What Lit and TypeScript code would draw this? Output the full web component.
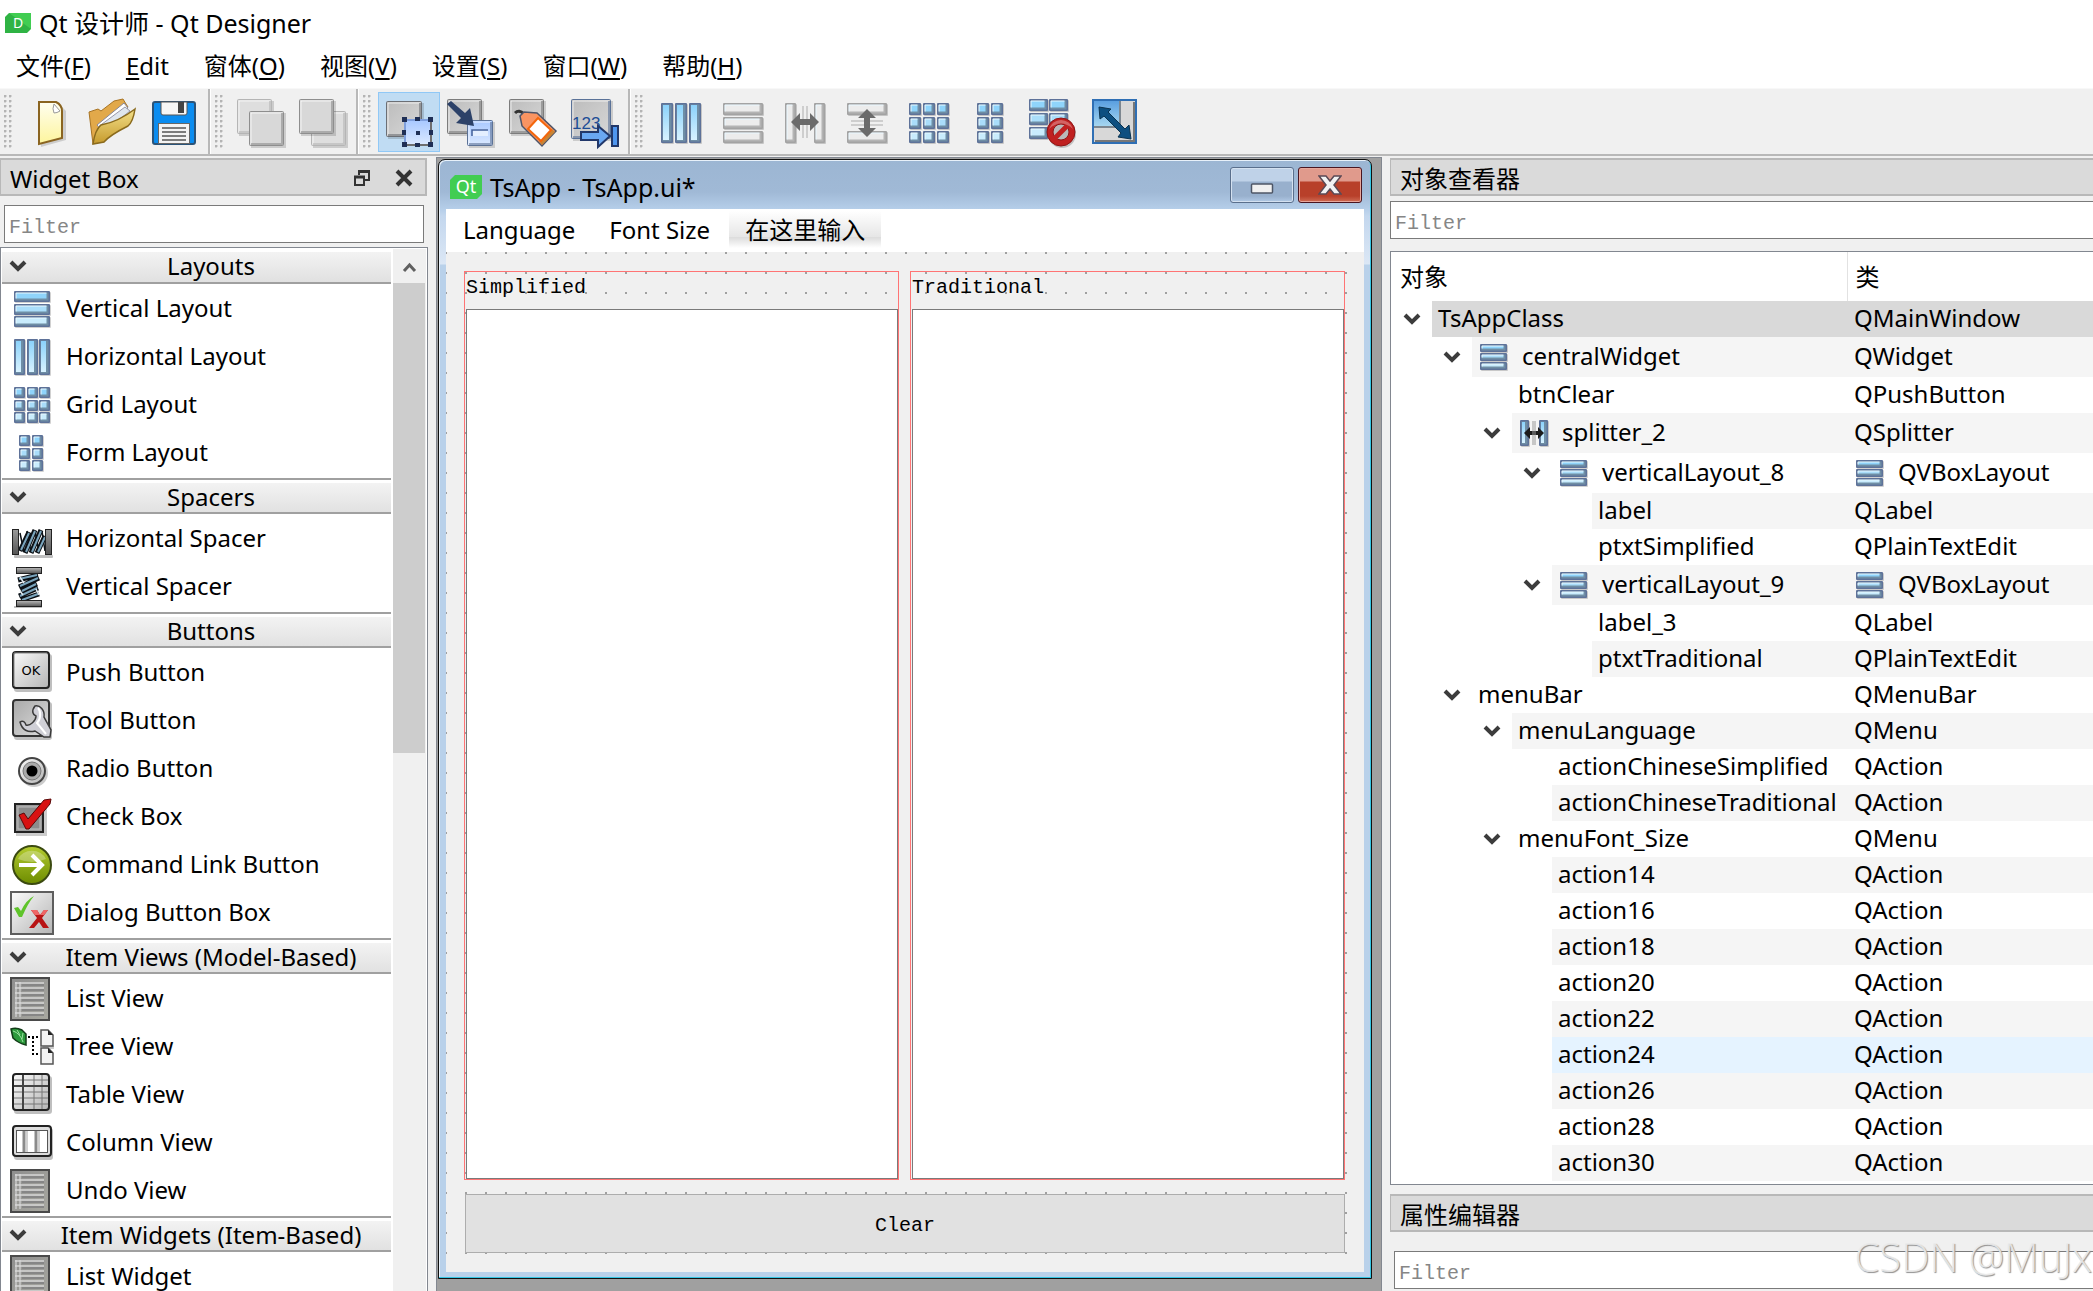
import { LitElement, html, svg, css, nothing } from "lit";
import { customElement, state } from "lit/decorators.js";
import { classMap } from "lit/directives/class-map.js";

type Tone = "blue" | "gray";

/** A bevelled cell, the building block of every layout icon. */
const cell = (x: number, y: number, w: number, h: number, row = 0, tone: Tone = "blue") => {
  const edge = tone === "blue" ? "#5e7299" : "#a3a3a3";
  const dark = tone === "blue" ? "#6f8ea5" : "#b4b4b4";
  const fill = tone === "blue" ? ["#8fd4fb", "#aaddfa", "#c9ecfd"][row] : "#ececec";
  return svg`
    <rect x=${x + 1} y=${y + 1} width=${w} height=${h} rx="1" fill="#000" opacity=".18"></rect>
    <rect x=${x} y=${y} width=${w} height=${h} rx="1" fill=${edge}></rect>
    <rect x=${x + 1.5} y=${y + 1.5} width=${w - 3} height=${h - 3} fill=${dark}></rect>
    <rect x=${x + 2} y=${y + 2} width=${w - 5.5} height=${h - 5.5} fill=${fill}></rect>
    <path d="M${x + 2} ${y + h - 3.5}V${y + 2}H${x + w - 3.5}" fill="none" stroke="#e8f7ff" stroke-width="1"></path>`;
};

const tallBar = (x: number, y: number, w: number, h: number) => svg`
  <rect x=${x + 1} y=${y + 1} width=${w} height=${h} rx="1" fill="#000" opacity=".18"></rect>
  <rect x=${x} y=${y} width=${w} height=${h} rx="1" fill="#5e7299"></rect>
  <rect x=${x + 1.5} y=${y + 1.5} width=${w - 3} height=${h - 3} fill="#6f8ea5"></rect>
  <rect x=${x + 2} y=${y + 2} width=${w - 6} height=${h - 5} fill="url(#sky)"></rect>`;

const cells = (xs: number[], ys: number[], w: number, h: number, tone: Tone = "blue") =>
  ys.map((y, r) => xs.map((x) => cell(x, y, w, h, r, tone)));

const block = (x: number, y: number, s: number, edge = "#7c7c7c", fill = "url(#slab)") => svg`
  <rect x=${x + 2} y=${y + 2} width=${s} height=${s} fill="#000" opacity=".15"></rect>
  <rect x=${x + 0.5} y=${y + 0.5} width=${s - 1} height=${s - 1} rx="1" fill=${fill} stroke=${edge}></rect>
  <path d="M${x + 2} ${y + s - 2}V${y + 2}H${x + s - 2}" fill="none" stroke="#fff" opacity=".7"></path>
  <path d="M${x + s - 2} ${y + 2}V${y + s - 2}H${x + 2}" fill="none" stroke=${edge} stroke-width="2" opacity=".6"></path>`;

const listGlyph = svg`
  <rect x="1" y="1" width="38" height="42" fill="url(#list)" stroke="#4a4a4a" stroke-width="2"></rect>
  <path d="M6 5V40M10 5V40" stroke="#c9c9c9" stroke-width="1.500"></path>
  <path d="M5 6H34M5 11H34M5 16H34M5 21H34M5 26H34M5 31H34M5 36H34" stroke="#dadada" stroke-width="2" opacity=".7"></path>
  <path d="M12 8H34M12 13H34M12 18H34M12 23H34M12 28H34M12 33H34M12 38H34" stroke="#868686" stroke-width="2"></path>`;

/** Coil between two end plates, drawn lying down. */
const coil = svg`
  <path d="M10 34L19 15M15 36L25 13M21 36L31 13M27 36L35 19" stroke="#0c1116" stroke-width="5"></path>
  <path d="M10 16L14 35M17 14L21 35M25 14L29 35M32 14L35 34" stroke="#0c1116" stroke-width="1.500"></path>
  <path d="M11 33L19 16M16 35L25 14M22 35L31 14M28 35L35 20" stroke="#7ba5bd" stroke-width="2"></path>
  <rect x="4" y="38" width="39" height="3" rx="1" fill="#000" opacity=".25"></rect>
  <rect x="2.500" y="12.500" width="6" height="25" fill="url(#post)" stroke="#222"></rect>
  <rect x="35.500" y="12.500" width="6" height="25" fill="url(#post)" stroke="#222"></rect>`;

const uprightCoil = svg`
  <path d="M8 15L28 10M9 22L29 13M11 26L27 19M9 31L28 23M11 35L29 29" stroke="#0c1116" stroke-width="5"></path>
  <path d="M9 14L27 10M10 21L28 13M12 26L26 19M10 31L27 23M12 35L28 29" stroke="#7ba5bd" stroke-width="2"></path>
  <path d="M10 12L14 18M26 24L29 30M10 26L13 30" stroke="#dfe9ef" stroke-width="1.500"></path>
  <rect x="4" y="41" width="28" height="2" fill="#000" opacity=".25"></rect>
  <rect x="6.500" y="2.500" width="25" height="6" fill="url(#plate)" stroke="#222"></rect>
  <rect x="6.500" y="35.500" width="25" height="6" fill="url(#plate)" stroke="#222"></rect>`;

const A = [4, 17, 29];
const B = [5, 19, 33];
const C = [4, 18, 32];

const widgetIcons: Record<string, unknown> = {
  vlayout: cells([4], A, 36, 11),
  hlayout: A.map((x) => tallBar(x, 4, 11, 36)),
  grid: cells(A, A, 11, 11),
  form: cells([9, 22], A, 11, 11),
  hspacer: coil,
  vspacer: uprightCoil,
  push: svg`
    <rect x="4" y="3" width="38" height="38" rx="3" fill="#000" opacity=".25"></rect>
    <rect x="3" y="1" width="36" height="36" rx="3" fill="url(#face)" stroke="#222" stroke-width="2"></rect>
    <path d="M4 35V2H37" fill="none" stroke="#888"></path>
    <text x="21" y="24" text-anchor="middle" class="ok">OK</text>`,
  tool: svg`
    <rect x="4" y="3" width="38" height="38" rx="3" fill="#000" opacity=".25"></rect>
    <rect x="3" y="1" width="36" height="36" rx="3" fill="url(#steel)" stroke="#333" stroke-width="2"></rect>
    <path d="M25 7C30 6 35 11 34 18L41 31L40 38H34L25 32C18 34 12 31 10 23C13 21 15 23 16 26C20 27 26 22 26 17C23 16 21 12 25 7Z" fill="#cfcfd6" stroke="#3a3a3a" stroke-width="1.500"></path>
    <path d="M28 9C31 12 31 20 27 24L36 35" fill="none" stroke="#fff" stroke-width="2"></path>`,
  radio: svg`
    <circle cx="24" cy="26" r="14" fill="#000" opacity=".2"></circle>
    <circle cx="22" cy="24" r="13" fill="url(#face)" stroke="#444" stroke-width="2"></circle>
    <circle cx="22" cy="24" r="9" fill="#aaa" stroke="#777"></circle>
    <circle cx="22" cy="24" r="5.500" fill="#000"></circle>`,
  check: svg`
    <rect x="6" y="10" width="31" height="31" fill="#000" opacity=".2"></rect>
    <rect x="5" y="9" width="28" height="28" fill="#9a9a9a" stroke="#222" stroke-width="2"></rect>
    <rect x="8" y="12" width="22" height="22" fill="#8b8b8b" stroke="#bdbdbd"></rect>
    <path d="M9 20L14 18L18 24L34 5L41 4L40 9L19 34H16Z" fill="#d81212" stroke="#5a0808"></path>`,
  command: svg`
    <circle cx="22" cy="22" r="19" fill="url(#lime)" stroke="#3b4a10" stroke-width="2"></circle>
    <path d="M8 16A15 13 0 0 1 36 16Q22 22 8 16" fill="#fff" opacity=".28"></path>
    <path d="M9 22H31M22 12L32 22L22 32" fill="none" stroke="#fff" stroke-width="4"></path>`,
  dialog: svg`
    <rect x="1" y="1" width="42" height="42" fill="url(#face)" stroke="#5e5e5e" stroke-width="2"></rect>
    <path d="M4 17L8 16L11 20Q16 9 24 5Q18 12 12 26H9Z" fill="#5fc42a"></path>
    <path d="M21 19H27L30 24L34 19H38L32 27L39 37H33L29 31L24 37H19L27 27Z" fill="#b81414"></path>
    <path d="M21 19H27L30 24L34 19H38L34 24H25Z" fill="#e66"></path>`,
  list: listGlyph,
  tree: svg`
    <path d="M1 4Q6 2 12 5L16 9V20Q8 18 3 13Z" fill="#2c9a3c" stroke="#123c18" stroke-width="1.500"></path>
    <path d="M3 6Q10 8 13 17M7 5L10 10M13 8L12 14" stroke="#9be29f" fill="none"></path>
    <path d="M18 12H29M23 12V29H29" fill="none" stroke="#000" stroke-width="2" stroke-dasharray="2 2"></path>
    <rect x="33" y="21" width="11" height="3" fill="#000" opacity=".2"></rect>
    <path d="M31 5H38L43 10V21H31ZM31 23H38L43 28V39H31Z" fill="#f4f4f4" stroke="#555" stroke-width="1.500"></path>
    <path d="M38 5V10H43ZM38 23V28H43Z" fill="#222"></path>`,
  table: svg`
    <rect x="4" y="3" width="38" height="38" rx="3" fill="#000" opacity=".25"></rect>
    <rect x="3" y="1" width="36" height="36" rx="3" fill="url(#face)" stroke="#222" stroke-width="2"></rect>
    <path d="M4 7H38M4 19H38M4 25H38M4 31H38M24 2V36M32 2V36" stroke="#777"></path>
    <path d="M13 2V36M4 13H38" stroke="#444" stroke-width="2"></path>`,
  column: svg`
    <rect x="4" y="7" width="39" height="32" rx="3" fill="#000" opacity=".25"></rect>
    <rect x="3" y="5" width="38" height="30" rx="3" fill="#ddd" stroke="#222" stroke-width="2"></rect>
    <rect x="6.500" y="9.500" width="31" height="22" fill="#fff" stroke="#555"></rect>
    <path d="M14 10V31M26 10V31" stroke="#8a8a8a" stroke-width="3"></path>
    <path d="M17 10V31M29 10V31" stroke="#d0d0d0" stroke-width="2"></path>`,
};

const splitArrow = (color: string) => svg`
  <path d="M10 24L19 15V21H29V15L38 24L29 33V27H19V33Z" fill=${color}></path>
  <path d="M22 8V40M26 8V40" stroke=${color} stroke-width="1" opacity=".5"></path>`;

const toolIcons: Record<string, unknown> = {
  new: svg`
    <path d="M14 5H32L40 13V42L15 49Z" fill="#000" opacity=".15"></path>
    <path d="M13 4H30Q36 7 36 13V40L13 46Z" fill="url(#paper)" stroke="#8a6420" stroke-width="2"></path>
    <path d="M28 6Q26 11 28 15Q31 15 34 13Z" fill="#fff" stroke="#999"></path>`,
  open: svg`
    <path d="M1 14L10 11L13 13L26 3L35 1L38 6L40 9L12 34L5 46Z" fill="#e2a94a" stroke="#a87424"></path>
    <path d="M9 27L36 5L40 10L14 32Z" fill="#fff" stroke="#889"></path>
    <path d="M10 29L37 9L42 13L15 34Z" fill="#dfe6ee" stroke="#99a"></path>
    <path d="M5 46Q7 32 13 27Q30 24 47 11Q45 24 40 28Q22 37 16 44Z" fill="url(#folder)" stroke="#8a6a1c" stroke-width="1.500"></path>`,
  save: svg`
    <rect x="3" y="4" width="42" height="42" rx="2" fill="#0a8cf0" stroke="#2a5378" stroke-width="2"></rect>
    <path d="M11 4H37V15Q37 17 35 17H13Q11 17 11 15Z" fill="#f6f6f6" stroke="#555"></path>
    <rect x="28" y="4" width="6" height="11" fill="#444"></rect>
    <rect x="8.500" y="25.500" width="31" height="20" fill="#f3f3f3" stroke="#666"></rect>
    <path d="M12 30H36M12 34H36M12 38H36M12 42H36" stroke="#555" stroke-width="1.500"></path>`,
  toBack: svg`${block(0, 1, 35, "#b5b5b5", "#dedede")}${block(12, 13, 35, "#8e8e8e", "#d8d8d8")}`,
  toFront: svg`${block(12, 13, 35, "#b5b5b5", "#dedede")}${block(0, 1, 35, "#8e8e8e", "#d8d8d8")}`,
  editWidgets: svg`
    ${block(1, 3, 36, "#6c6f75")}
    <rect x="20" y="22" width="26" height="25" fill="url(#ice)" stroke="#7f9fdc" stroke-width="2"></rect>
    <path d="M46 24V47H22" fill="none" stroke="#6e6e6e" stroke-width="2"></path>
    <path d="M17 19h5v5h-5zM30 19h5v4h-5zM43 19h5v5h-5zM17 32h4v5h-4zM31 33h4v4h-4zM44 32h4v5h-4zM17 44h5v5h-5zM30 45h5v4h-5zM43 44h5v5h-5z" fill="#1f2f55"></path>`,
  editSignals: svg`
    ${block(0, 1, 35)}${block(20, 22, 26, "#5c7296", "url(#ice)")}
    <rect x="25" y="31" width="16" height="7" fill="#e4efff"></rect>
    <path d="M25 38V32H41" fill="none" stroke="#3f5f9a" stroke-width="1.500"></path>
    <path d="M0 6L4 3L18 15L23 10L27 28L9 25L14 20Z" fill="#2c4168"></path>`,
  editBuddies: svg`
    ${block(0, 1, 35)}
    <path d="M6 15Q10 11 15 16" fill="none" stroke="#333" stroke-width="3"></path>
    <path d="M11 18L15 14L28 15L47 33L33 48L13 28Z" fill="#f99462" stroke="#4e5568" stroke-width="1.500"></path>
    <path d="M46 34L33 47L30 43L43 31Z" fill="#c98434"></path>
    <path d="M29 20L42 32L32 43L19 31Z" fill="#fff" stroke="#f4660c" stroke-width="2"></path>`,
  editTabs: svg`
    ${block(0, 1, 40, "#5a7298")}
    <text x="1" y="31" class="num">123</text>
    <path d="M10 34H27V28L39 38L27 49V42H10Z" fill="#6aa8f2" stroke="#22386a" stroke-width="2"></path>
    <rect x="41" y="28" width="6" height="20" fill="#4f97f0" stroke="#22386a" stroke-width="2"></rect>`,
  hlayout: C.map((x) => tallBar(x, 5, 12, 40)),
  vlayout: cells([4], B, 40, 12, "gray"),
  hsplit: svg`${cell(4, 5, 11, 40, 0, "gray")}${cell(33, 5, 11, 40, 0, "gray")}${splitArrow("#6b6b6b")}`,
  vsplit: svg`${cell(4, 5, 40, 12, 0, "gray")}${cell(4, 33, 40, 12, 0, "gray")}
    <g transform="rotate(90 24 25) translate(0 1)">${splitArrow("#6b6b6b")}</g>`,
  grid: cells(C, B, 12, 12),
  form: cells([10, 24], B, 12, 12),
  breakLayout: svg`
    ${cells([0, 20], [1, 15, 29], 19, 12)}
    <circle cx="33" cy="36" r="14" fill="#000" opacity=".2"></circle>
    <circle cx="32" cy="34" r="14" fill="#c02020" stroke="#8e1616"></circle>
    <circle cx="32" cy="34" r="8" fill="#b9b9b9" stroke="#8e1616"></circle>
    <path d="M26 40L38 28" stroke="#c02020" stroke-width="5"></path>
    <path d="M20 31A12.500 12.500 0 0 1 44 31Q32 20 20 31" fill="#fff" opacity=".3"></path>`,
  adjust: svg`
    <rect x="2" y="2" width="43" height="43" fill="#d8d8d8" stroke="#2f6fb4" stroke-width="2"></rect>
    <rect x="3" y="3" width="26" height="26" fill="url(#sea)"></rect>
    <path d="M29 3V29H3" fill="none" stroke="#7d8790" stroke-width="2"></path>
    <path d="M43 4V43H4" fill="none" stroke="#777" stroke-width="2"></path>
    <path d="M8 9L20 11L17 14L34 31L38 27L40 41L27 39L30 35L13 18L9 21Z" fill="#0d4f80" stroke="#0a3350"></path>`,
};

const miniIcons: Record<string, unknown> = {
  vbox: cells([0], [1, 10, 19], 27, 8),
  split: svg`${tallBar(0, 1, 9, 26)}${tallBar(19, 1, 9, 26)}
    <path d="M4 14L10 8V12H18V8L24 14L18 20V16H10V20Z" fill="#1c1c1c"></path>
    <path d="M13 2V26M15 2V26" stroke="#999"></path>`,
};

const chevron = html`<svg class="chevron" viewBox="0 0 18 14" aria-hidden="true">
  <path d="M2 3L9 10L16 3" fill="none" stroke="#3c3c3c" stroke-width="4"></path>
</svg>`;

const menus = [
  ["文件", "F"], ["", "E", "dit"], ["窗体", "O"], ["视图", "V"], ["设置", "S"], ["窗口", "W"], ["帮助", "H"],
];

const toolbars: [string, string][][] = [
  [["new", "New"], ["open", "Open"], ["save", "Save"]],
  [["toBack", "Send to Back"], ["toFront", "Bring to Front"]],
  [["editWidgets", "Edit Widgets"], ["editSignals", "Edit Signals/Slots"], ["editBuddies", "Edit Buddies"], ["editTabs", "Edit Tab Order"]],
  [["hlayout", "Lay Out Horizontally"], ["vlayout", "Lay Out Vertically"], ["hsplit", "Horizontal Splitter"], ["vsplit", "Vertical Splitter"],
   ["grid", "Grid"], ["form", "Form"], ["breakLayout", "Break Layout"], ["adjust", "Adjust Size"]],
];

const sections: { title: string; items: [string, string][] }[] = [
  { title: "Layouts", items: [["vlayout", "Vertical Layout"], ["hlayout", "Horizontal Layout"], ["grid", "Grid Layout"], ["form", "Form Layout"]] },
  { title: "Spacers", items: [["hspacer", "Horizontal Spacer"], ["vspacer", "Vertical Spacer"]] },
  { title: "Buttons", items: [["push", "Push Button"], ["tool", "Tool Button"], ["radio", "Radio Button"], ["check", "Check Box"], ["command", "Command Link Button"], ["dialog", "Dialog Button Box"]] },
  { title: "Item Views (Model-Based)", items: [["list", "List View"], ["tree", "Tree View"], ["table", "Table View"], ["column", "Column View"], ["list", "Undo View"]] },
  { title: "Item Widgets (Item-Based)", items: [["list", "List Widget"]] },
];

interface Node { name: string; type: string; level: number; open?: boolean; icon?: string; typeIcon?: string }

const tree: Node[] = [
  { name: "TsAppClass", type: "QMainWindow", level: 0, open: true },
  { name: "centralWidget", type: "QWidget", level: 1, open: true, icon: "vbox" },
  { name: "btnClear", type: "QPushButton", level: 2 },
  { name: "splitter_2", type: "QSplitter", level: 2, open: true, icon: "split" },
  { name: "verticalLayout_8", type: "QVBoxLayout", level: 3, open: true, icon: "vbox", typeIcon: "vbox" },
  { name: "label", type: "QLabel", level: 4 },
  { name: "ptxtSimplified", type: "QPlainTextEdit", level: 4 },
  { name: "verticalLayout_9", type: "QVBoxLayout", level: 3, open: true, icon: "vbox", typeIcon: "vbox" },
  { name: "label_3", type: "QLabel", level: 4 },
  { name: "ptxtTraditional", type: "QPlainTextEdit", level: 4 },
  { name: "menuBar", type: "QMenuBar", level: 1, open: true },
  { name: "menuLanguage", type: "QMenu", level: 2, open: true },
  { name: "actionChineseSimplified", type: "QAction", level: 3 },
  { name: "actionChineseTraditional", type: "QAction", level: 3 },
  { name: "menuFont_Size", type: "QMenu", level: 2, open: true },
  ...[14, 16, 18, 20, 22, 24, 26, 28, 30].map((n) => ({ name: `action${n}`, type: "QAction", level: 3 })),
];

@customElement("app-root")
export class AppRoot extends LitElement {
  @state() private mode = "editWidgets";
  @state() private selected = "TsAppClass";

  static styles = css`
    :host {
      display: flex; flex-direction: column; height: 100vh; overflow: hidden;
      background: #f0f0f0; color: #000;
      font: 24px/36px "Noto Sans", "Noto Sans CJK SC", sans-serif;
    }
    *, *::before { box-sizing: border-box; }
    button { font: inherit; color: inherit; border: 0; padding: 0; background: none; text-align: left; }
    input, textarea { font: 20px/24px "Liberation Mono", monospace; outline: 0; border-radius: 0; }
    ul { list-style: none; margin: 0; padding: 0; }
    svg { display: block; flex: none; }
    .defs { position: absolute; width: 0; height: 0; }

    .titlebar { display: flex; align-items: center; gap: 8px; height: 46px; padding-left: 5px; background: #fff; flex: none; }
    .titlebar h1 { font: inherit; font-size: 25px; margin: 0; }
    .logo { width: 26px; height: 20px; }
    .menubar { display: flex; gap: 35px; height: 42px; padding: 0 16px 2px; background: #fff; flex: none; }
    .menubar u { text-underline-offset: 3px; text-decoration-thickness: 2px; }

    .toolbars { display: flex; height: 68px; flex: none; border-top: 1px solid #f8f8f8; border-bottom: 2px solid #b8b8b8; margin-bottom: 1px; }
    .toolbar { display: flex; align-items: center; padding: 0 2px 0 4px; border-right: 2px solid #b8b8b8; border-left: 1px solid #fff; }
    .toolbar:first-child { border-left: 0; padding-right: 3px; }
    .toolbar:last-child { border-right: 0; }
    .grip { width: 8px; height: 54px; margin-right: 7px; background: radial-gradient(circle at 1px 1px, #b4b4b4 1px, transparent 2px) 0 0 / 5px 5px; }
    .tool { display: flex; align-items: center; justify-content: center; width: 62px; height: 60px; border: 1px solid transparent; }
    .tool.on { background: #c0dcf3; border-color: #90c8f6; }
    .tool svg { width: 48px; height: 48px; overflow: visible; }

    .main { display: grid; grid-template-columns: 428px minmax(0, 1fr) 703px; flex: 1; min-height: 0; }
    .dock { display: flex; flex-direction: column; min-height: 0; min-width: 0; padding-top: 1px; }
    .dock-title { display: flex; align-items: center; height: 38px; flex: none; padding: 0 12px 0 9px; background: #dadada; border: 2px solid #b8b8b8; border-left-width: 1px; margin: 0; }
    .dock-title h2 { font: inherit; margin: 0; flex: 1; padding-top: 3px; }
    .dock-title svg { width: 18px; height: 18px; }
    .dock-title button { padding-top: 1px; }
    .dock-title button + button { margin-left: 24px; }
    .filter { height: 38px; flex: none; border: 1px solid #7a7a7a; padding: 6px 4px 0; background: #fff; }
    .filter::placeholder { color: #868686; opacity: 1; }

    .left .dock-title { margin-right: 1px; }
    .left .filter { margin: 9px 4px 4px; }
    .box { display: flex; flex: 1; min-height: 0; overflow: hidden; background: #fff; border: 1px solid #828790; border-bottom: 0; padding: 1px 1px 0; }
    .sections { flex: 1; min-width: 0; }
    .section-head { display: flex; align-items: center; width: 100%; height: 38px; padding-left: 7px; background: linear-gradient(#f3f3f3, #e0e0e0) 0 3px / 100% 31px no-repeat; border-top: 2px solid #a0a0a0; position: relative; }
    .section-head::before { content: ""; position: absolute; left: 0; right: 0; bottom: 2px; height: 2px; background: #a0a0a0; }
    .section:first-child .section-head { border-top: 0; height: 37px; }
    .section-head span { flex: 1; text-align: center; padding: 0 0 3px 4px; }
    .section-head .chevron { margin-bottom: 3px; }
    .chevron { width: 18px; height: 14px; }
    .item { display: flex; gap: 12px; height: 48px; padding: 1px 0 0 8px; line-height: 42px; }
    .item svg { width: 44px; height: 44px; overflow: visible; }
    .ok { font: 13px "DejaVu Sans", sans-serif; }
    .num { font: 17px "Liberation Sans Narrow", "Liberation Sans", sans-serif; fill: #1d4d96; }
    .scroll { width: 33px; margin-left: 2px; background: #f0f0f0; }
    .scroll svg { width: 32px; height: 34px; }
    .thumb { width: 32px; height: 470px; background: #cdcdcd; }

    .mdi { display: flex; margin: 0 8px; min-height: 0; padding: 1px 9px 12px 1px; border: 1px solid #828790; border-bottom: 0; background: #a0a0a0; }
    .window { display: flex; flex-direction: column; flex: 1; min-width: 0; border: 1px solid #111; border-radius: 7px 7px 0 0; padding: 0 7px 6px; overflow: hidden;
      background: linear-gradient(#9cb6d3, #a0b9d6 32px, #b5cee9 49px, #c3d7ee 56px, #dbe7f5 104px, #b9d1ea 105px); box-shadow: inset -1px -1px #34c6e4, inset 1px 1px #e8f1fa; }
    .window-title { display: flex; align-items: center; gap: 8px; height: 49px; flex: none; padding-left: 4px; }
    .window-title h2 { font: inherit; font-size: 25px; flex: 1; margin: 0; padding-top: 5px; }
    .window-title .qt { width: 32px; height: 24px; margin-top: 5px; }
    .cap { width: 64px; height: 36px; display: grid; place-items: center; border: 1px solid #5a6f8c; border-radius: 3px; box-shadow: inset 0 0 0 1px #d4e1f0; background: linear-gradient(#bfd2e8 0 13px, #98b0cd 14px 28px, #b2cae6); margin: 1px 2px 0 -6px; }
    .cap.close { border-color: #4a1520; box-shadow: inset 0 0 0 1px #e8a79c; background: linear-gradient(#e09a8c 0 13px, #b8402a 14px 28px, #cf6d55); }
    .cap svg { width: 24px; height: 20px; }
    .form-menu { display: flex; height: 43px; flex: none; background: #fff; padding: 2px 0 4px; }
    .form-menu button { padding: 0 17px; }
    .form-menu .type-here { background: linear-gradient(#fff, #e6e6e6 70%, #dcdcdc 71%, #fff); margin-left: 2px; padding: 0 16px; }
    .form { flex: 1; min-height: 0; display: flex; flex-direction: column; padding: 19px 19px 19px 18px;
      background: conic-gradient(from 0deg at 2px 2px, transparent 0 75%, #a0a0a0 75%) -1px 0 / 20px 20px #f0f0f0; }
    .panes { display: flex; gap: 11px; flex: 1; min-height: 0; margin-bottom: 14px; }
    .pane { flex: 1; min-width: 0; display: flex; flex-direction: column; border: 1px solid #ff7474; }
    .pane + .pane { box-shadow: -10px 0 #f0f0f0; }
    .pane label { height: 37px; flex: none; padding-left: 1px; font: 20px/32px "Liberation Mono", monospace; }
    .pane textarea { flex: 1; resize: none; border: 1px solid #7a7a7a; margin: 0 0 0 1px; background: #fff; }
    .clear { height: 59px; flex: none; text-align: center; background: #e1e1e1; border: 1px solid #adadad; margin-left: 1px; padding-top: 4px; font: 20px/24px "Liberation Mono", monospace; }

    .right .dock-title { border-right: 0; }
    .right .filter { border-right: 0; margin: 5px 0 12px; }
    .right .filter.property { margin: 19px 0 0 4px; }
    .tree { border: 1px solid #828790; border-right: 0; background: #fff; padding-bottom: 3px; margin-bottom: 9px; }
    table { width: 100%; table-layout: fixed; border-collapse: collapse; }
    th, td { padding: 0; font-weight: 400; text-align: left; white-space: nowrap; }
    th { height: 49px; padding-left: 9px; }
    th:first-child { width: 456px; }
    th + th { border-left: 1px solid #e2e2e2; padding-left: 8px; }
    .cellbox { display: flex; align-items: center; height: 36px; padding-left: 6px; position: relative; }
    .cellbox span { padding-bottom: 2px; }
    .iconrow .cellbox { height: 40px; }
    .cellbox svg.mini { width: 28px; height: 28px; margin: 0 14px 0 2px; overflow: visible; }
    .typecell .cellbox { padding-left: 7px; }
    .l0 { padding-left: 41px; } .l1 { padding-left: 81px; } .l2 { padding-left: 121px; } .l3 { padding-left: 161px; } .l4 { padding-left: 201px; }
    .toggle { position: absolute; left: -29px; top: 50%; margin-top: -7px; line-height: 14px; }
    .alt .cellbox { background: #f5f5f5; }
    .hover .cellbox { background: #e5f3ff; }
    .sel .cellbox { background: #d9d9d9; }
    .watermark { position: absolute; right: 1px; bottom: 12px; font: 300 40px/44px "Open Sans", "Noto Sans", sans-serif; color: rgba(235, 235, 235, .9); text-shadow: 1px 1px 1px #909090; pointer-events: none; }
  `;

  private defs() {
    const g = (id: string, a: string, b: string, diag = false) => svg`
      <linearGradient id=${id} x1="0" y1="0" x2=${diag ? "1" : "0"} y2="1">
        <stop offset="0" stop-color=${a}></stop><stop offset="1" stop-color=${b}></stop>
      </linearGradient>`;
    return html`<svg class="defs" aria-hidden="true"><defs>
      ${g("sky", "#8bd2fb", "#d8f2ff")}${g("steel", "#a8a8a8", "#dedede", true)}${g("slab", "#bcbcbc", "#d8d8d8", true)}${g("face", "#fbfbfb", "#b4b4b4", true)}
      ${g("list", "#8e8e8e", "#a8a8a0", true)}${g("post", "#999", "#555")}${g("plate", "#bbb", "#555")}${g("lime", "#b4cc30", "#6d8c00")}
      ${g("paper", "#fffef0", "#fdf59c")}${g("folder", "#f3e08a", "#c69a2c")}${g("ice", "#a8c8ff", "#dbe9ff")}${g("sea", "#5a9fe0", "#a8d8f0")}
    </defs></svg>`;
  }

  private menuItem([before, key, after]: string[]) {
    return html`<button>${before}${before ? "(" : nothing}<u>${key}</u>${after ?? ")"}</button>`;
  }

  private row(node: Node, i: number) {
    const rowClass = {
      alt: i % 2 === 1,
      sel: node.name === this.selected,
      hover: node.name === "action24",
      iconrow: !!node.icon,
    };
    const mini = (name?: string) =>
      name ? html`<svg class="mini" viewBox="0 0 28 28" aria-hidden="true">${miniIcons[name]}</svg>` : nothing;
    return html`<tr class=${classMap(rowClass)} @click=${() => (this.selected = node.name)}>
      <td class="l${node.level}"><div class="cellbox">
        ${node.open ? html`<button class="toggle" aria-label="Collapse ${node.name}">${chevron}</button>` : nothing}
        ${mini(node.icon)}<span>${node.name}</span>
      </div></td>
      <td class="typecell"><div class="cellbox">${mini(node.typeIcon)}<span>${node.type}</span></div></td>
    </tr>`;
  }

  private widgetBox() {
    return html`<aside class="dock left">
      <header class="dock-title"><h2>Widget Box</h2>
        <button aria-label="Float"><svg viewBox="0 0 18 18">
          <path d="M6 6V2H16V11H12M2 8H11V16H2Z" fill="none" stroke="#333" stroke-width="2"></path><path d="M5 2.500H17M1 8H12" stroke="#333" stroke-width="3"></path></svg></button>
        <button aria-label="Close"><svg viewBox="0 0 18 18"><path d="M2 2L16 16M16 2L2 16" stroke="#333" stroke-width="4"></path></svg></button>
      </header>
      <input class="filter" type="text" placeholder="Filter" aria-label="Filter widgets" />
      <div class="box">
        <div class="sections">${sections.map((s) => html`<section class="section">
          <button class="section-head">${chevron}<span>${s.title}</span></button>
          <ul>${s.items.map(([icon, name]) => html`<li class="item">
            <svg viewBox="0 0 44 44" aria-hidden="true">${widgetIcons[icon]}</svg><span>${name}</span></li>`)}</ul>
        </section>`)}</div>
        <div class="scroll">
          <svg viewBox="0 0 32 34" aria-hidden="true"><path d="M11 22L16.500 16L22 22" fill="none" stroke="#606060" stroke-width="3"></path></svg>
          <div class="thumb"></div>
        </div>
      </div>
    </aside>`;
  }

  private formWindow() {
    return html`<main class="mdi"><section class="window">
      <header class="window-title">
        <svg class="qt" viewBox="0 0 32 24" aria-hidden="true"><path d="M5 0H32V19L27 24H0V5Z" fill="#41cd52"></path>
          <text x="16" y="18" text-anchor="middle" fill="#fff" font-size="18" font-family="Noto Sans">Qt</text></svg>
        <h2>TsApp - TsApp.ui*</h2>
        <button class="cap" aria-label="Minimize"><svg viewBox="0 0 24 20"><rect x="1.500" y="9" width="21" height="9" rx="1" fill="#f0f0f0" stroke="#4d5666" stroke-width="1.500"></rect></svg></button>
        <button class="cap close" aria-label="Close form"><svg viewBox="0 0 24 20"><path d="M1 1H8L12 6L16 1H23L16 10L23 19H16L12 14L8 19H1L8 10Z" fill="#f2f2f2" stroke="#5b4a55" stroke-width="1.500"></path></svg></button>
      </header>
      <nav class="form-menu"><button>Language</button><button>Font Size</button><button class="type-here">在这里输入</button></nav>
      <div class="form">
        <div class="panes">
          <div class="pane"><label for="simplified">Simplified</label><textarea id="simplified"></textarea></div>
          <div class="pane"><label for="traditional">Traditional</label><textarea id="traditional"></textarea></div>
        </div>
        <button class="clear">Clear</button>
      </div>
    </section></main>`;
  }

  private inspector() {
    return html`<aside class="dock right">
      <header class="dock-title"><h2>对象查看器</h2></header>
      <input class="filter" type="text" placeholder="Filter" aria-label="Filter objects" />
      <div class="tree"><table>
        <thead><tr><th>对象</th><th>类</th></tr></thead>
        <tbody>${tree.map((n, i) => this.row(n, i))}</tbody>
      </table></div>
      <header class="dock-title"><h2>属性编辑器</h2></header>
      <input class="filter property" type="text" placeholder="Filter" aria-label="Filter properties" />
    </aside>`;
  }

  render() {
    return html`${this.defs()}
      <header class="titlebar">
        <svg class="logo" viewBox="0 0 26 20" aria-hidden="true">
          <path d="M4 0H26V16L22 20H0V4Z" fill="#2fb344"></path><path d="M4 0H26V16Z" fill="#41cd52"></path>
          <text x="13" y="15" text-anchor="middle" fill="#fff" font-size="14" font-family="Noto Sans">D</text></svg>
        <h1>Qt 设计师 - Qt Designer</h1>
      </header>
      <nav class="menubar">${menus.map((m) => this.menuItem(m))}</nav>
      <div class="toolbars">${toolbars.map((bar) => html`<div class="toolbar" role="toolbar"><span class="grip"></span>
        ${bar.map(([id, label]) => html`<button class=${classMap({ tool: true, on: id === this.mode })} aria-label=${label}
          @click=${() => { if (id.startsWith("edit")) this.mode = id; }}>
          <svg viewBox="0 0 48 48" aria-hidden="true">${toolIcons[id]}</svg></button>`)}
      </div>`)}</div>
      <div class="main">${this.widgetBox()}${this.formWindow()}${this.inspector()}</div>
      <div class="watermark">CSDN @MuJx</div>`;
  }
}
